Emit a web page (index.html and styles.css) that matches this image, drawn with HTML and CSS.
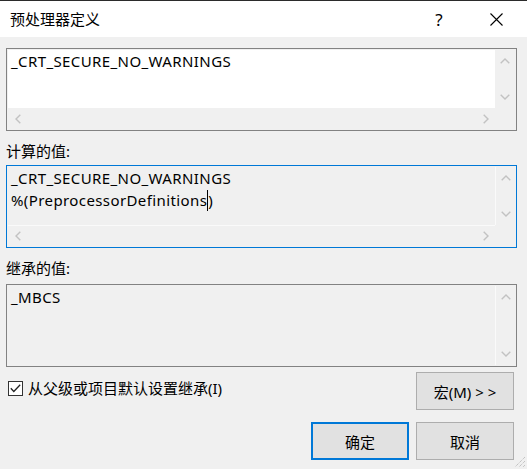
FILE: index.html
```html
<!DOCTYPE html>
<html lang="zh-CN">
<head>
<meta charset="UTF-8">
<title>预处理器定义</title>
<link rel="stylesheet" href="styles.css">
</head>
<body>

<div class="window">
    <!-- 标题栏 -->
    <div class="titlebar">
        <span class="title">预处理器定义</span>
        <span class="caption-btn help">?</span>
        <span class="caption-btn close">
            <svg width="13" height="13" viewBox="0 0 13 13"><path d="M0.5 0.5 L12.5 12.5 M12.5 0.5 L0.5 12.5" stroke="#000" stroke-width="1.1" fill="none"/></svg>
        </span>
    </div>

    <div class="content">
        <!-- 可编辑的定义 -->
        <div class="field">
            <div class="text">_CRT_SECURE_NO_WARNINGS</div>
            <div class="vscroll">
                <span class="arrow"><svg width="10" height="6" viewBox="0 0 10 6"><polyline points="0.7,5.3 5,1 9.3,5.3"/></svg></span>
                <span class="arrow"><svg width="10" height="6" viewBox="0 0 10 6"><polyline points="0.7,0.7 5,5 9.3,0.7"/></svg></span>
            </div>
            <div class="hscroll">
                <span class="arrow"><svg width="6" height="10" viewBox="0 0 6 10"><polyline points="5.3,0.7 1,5 5.3,9.3"/></svg></span>
                <span class="arrow"><svg width="6" height="10" viewBox="0 0 6 10"><polyline points="0.7,0.7 5,5 0.7,9.3"/></svg></span>
            </div>
            <div class="corner"></div>
        </div>

        <div class="label">计算的值:</div>
        <div class="field readonly focused">
            <div class="text">_CRT_SECURE_NO_WARNINGS<br>%(PreprocessorDefinitions<span class="caret"></span>)</div>
            <div class="vscroll">
                <span class="arrow"><svg width="10" height="6" viewBox="0 0 10 6"><polyline points="0.7,5.3 5,1 9.3,5.3"/></svg></span>
                <span class="arrow"><svg width="10" height="6" viewBox="0 0 10 6"><polyline points="0.7,0.7 5,5 9.3,0.7"/></svg></span>
            </div>
            <div class="hscroll">
                <span class="arrow"><svg width="6" height="10" viewBox="0 0 6 10"><polyline points="5.3,0.7 1,5 5.3,9.3"/></svg></span>
                <span class="arrow"><svg width="6" height="10" viewBox="0 0 6 10"><polyline points="0.7,0.7 5,5 0.7,9.3"/></svg></span>
            </div>
            <div class="corner"></div>
        </div>

        <div class="label">继承的值:</div>
        <div class="field readonly no-hscroll">
            <div class="text">_MBCS</div>
            <div class="vscroll">
                <span class="arrow"><svg width="10" height="6" viewBox="0 0 10 6"><polyline points="0.7,5.3 5,1 9.3,5.3"/></svg></span>
                <span class="arrow"><svg width="10" height="6" viewBox="0 0 10 6"><polyline points="0.7,0.7 5,5 9.3,0.7"/></svg></span>
            </div>
        </div>

        <div class="options">
            <label class="check">
                <span class="checkbox"><svg width="11" height="9" viewBox="0 0 11 9"><polyline points="0.8,4.3 3.8,7.5 10.2,0.8" fill="none" stroke="#222" stroke-width="1.3"/></svg></span>
                <span>从父级或项目默认设置继承<span class="latin">(I)</span></span>
            </label>
            <button class="btn">宏<span class="latin">(M) &gt; &gt;</span></button>
        </div>

        <div class="actions">
            <button class="btn primary">确定</button>
            <button class="btn">取消</button>
        </div>
    </div>

    <!-- 右下角的拖动柄 -->
    <svg class="grip" width="12" height="12" viewBox="0 0 12 12">
        <path d="M11 1 L1 11 M11 5 L5 11 M11 9 L9 11" stroke="#b0b0b0" stroke-width="1" stroke-dasharray="1 1" fill="none"/>
    </svg>
</div>

</body>
</html>
```

FILE: styles.css
```css
body {
    margin: 0;
    padding: 0;
    background: #f0f0f0;
    font-family: 'Noto Sans', 'Noto Sans CJK SC', sans-serif;
    font-size: 15px;
    color: #000;
}

.latin {
    font-family: 'Noto Sans', sans-serif;
}

.window {
    position: relative;
    width: 527px;
    height: 469px;
    overflow: hidden;
    background: #f0f0f0;
}

/* 标题栏 */
.titlebar {
    display: flex;
    align-items: center;
    height: 36px;
    background: #fff;
    border-top: 1px solid #2b2b2b;
    padding-right: 2px;
}

.title {
    flex: 1;
    padding-left: 10px;
    line-height: 36px;
}

.caption-btn {
    display: flex;
    align-items: center;
    justify-content: center;
    height: 36px;
}

.help {
    width: 58px;
    font-family: 'Noto Sans', sans-serif;
    font-size: 17px;
    padding-top: 1px;
    box-sizing: border-box;
}

.close { width: 57px; }

.content {
    padding: 11px 11px 0 6px;
}

/* 多行文本框 */
.field {
    display: grid;
    grid-template-columns: 1fr 20px;
    grid-template-rows: 58px 21px;
    width: 507px;
    border: 1px solid #828282;
    padding: 1px;
}

.field.no-hscroll {
    grid-template-rows: 79px;
}

.field.focused {
    border-color: #0078d7;
}

.field .text {
    background: #fff;
    padding: 0 3px;
    line-height: 22px;
    letter-spacing: 0.4px;
    white-space: nowrap;
}

.field.readonly .text {
    background: #f0f0f0;
}

.vscroll {
    display: flex;
    flex-direction: column;
    justify-content: space-between;
    background: #f0f0f0;
}

.vscroll .arrow {
    height: 22px;
    display: flex;
    align-items: center;
    justify-content: center;
}

.hscroll {
    display: flex;
    justify-content: space-between;
    background: #f0f0f0;
}

.hscroll .arrow {
    width: 19px;
    display: flex;
    align-items: center;
    justify-content: center;
}

.field.readonly .vscroll { border-left: 1px solid #fafafa; }
.field.readonly .hscroll { border-top: 1px solid #fafafa; }

.corner { background: #f0f0f0; }

.arrow svg polyline {
    fill: none;
    stroke: #c2c2c2;
    stroke-width: 1.4;
}

.caret {
    display: inline-block;
    width: 1px;
    height: 21px;
    background: #000;
    vertical-align: -5px;
}

.label {
    padding-top: 9px;
    height: 25px;
    line-height: 22px;
}

.label + .field.readonly.no-hscroll { margin-top: 2px; }

.options {
    display: flex;
    justify-content: space-between;
    align-items: flex-start;
    margin-top: 5px;
    padding-right: 2px;
}

.check {
    display: flex;
    align-items: center;
    gap: 5px;
    margin-top: 5px;
    padding-left: 2px;
    line-height: 22px;
}

.checkbox {
    width: 13px;
    height: 13px;
    border: 1px solid #333;
    background: #fff;
    display: flex;
    align-items: center;
    justify-content: center;
}

.btn {
    width: 98px;
    height: 38px;
    background: #e1e1e1;
    border: 1px solid #adadad;
    font-family: inherit;
    font-size: 15px;
    color: #000;
    padding: 0;
}

.btn.primary {
    border: 2px solid #0078d7;
}

.actions {
    display: flex;
    justify-content: flex-end;
    gap: 7px;
    margin-top: 12px;
    padding-right: 2px;
}

.grip {
    position: absolute;
    right: 1px;
    bottom: 1px;
}
```
